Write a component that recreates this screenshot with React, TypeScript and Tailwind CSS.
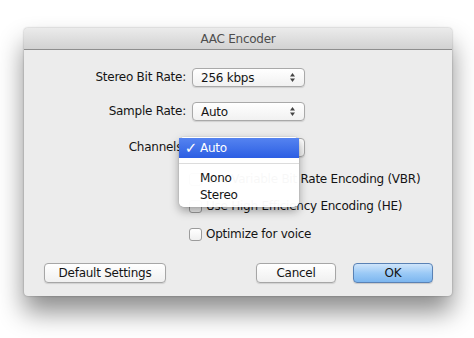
import React from 'react';

// Small up/down arrows shown at the right of a popup button
const Arrows: React.FC = () => (
  <svg width="7" height="11" viewBox="0 0 7 11" className="shrink-0">
    <path d="M3.5 1 L6 4.5 L1 4.5 Z" fill="#444" />
    <path d="M3.5 10 L6 6.5 L1 6.5 Z" fill="#444" />
  </svg>
);

const Popup: React.FC<{ value: string }> = ({ value }) => (
  <div className="w-[113px] h-[19px] flex items-center justify-between pl-[8px] pr-[8px] rounded-[4px] border border-[#a9a9a9] bg-gradient-to-b from-white to-[#f1f1f1] shadow-[0_1px_1px_rgba(0,0,0,0.12)]">
    <span>{value}</span>
    <Arrows />
  </div>
);

const Checkbox: React.FC<{ label: string }> = ({ label }) => (
  <div className="flex items-center gap-[4px] h-[18px]">
    <div className="w-[13px] h-[13px] rounded-[3px] border border-[#9b9b9b] bg-gradient-to-b from-white to-[#f0f0f0]" />
    <span>{label}</span>
  </div>
);

const Button: React.FC<{ label: string; primary?: boolean; width: string }> = ({ label, primary, width }) => (
  <div
    className={
      primary
        ? `${width} h-[20px] flex items-center justify-center rounded-[4px] border border-[#5a82b5] bg-gradient-to-b from-[#cfe5fb] via-[#9ccaf6] to-[#7cb6ef] shadow-[0_1px_1px_rgba(0,0,0,0.15)]`
        : `${width} h-[20px] flex items-center justify-center rounded-[4px] border border-[#a6a6a6] bg-gradient-to-b from-white to-[#f0f0f0] shadow-[0_1px_1px_rgba(0,0,0,0.12)]`
    }
  >
    {label}
  </div>
);

const App: React.FC = () => {
  return (
    <div
      className="w-[474px] h-[338px] bg-white pt-[28px] pl-[24px] text-[12px] tracking-[-0.25px] text-[#141414]"
      style={{ fontFamily: '"DejaVu Sans", sans-serif' }}
    >
      <div className="relative w-[428px] h-[268px] rounded-[4px] bg-[#ececec] shadow-[0_16px_26px_rgba(0,0,0,0.45),0_0_2px_rgba(0,0,0,0.35)] flex flex-col">
        {/* Title bar */}
        <div className="h-[22px] rounded-t-[4px] bg-gradient-to-b from-[#ebebeb] to-[#d2d2d2] border-b border-[#8e8e8e] flex items-center justify-center text-[#4d4d4d]">
          AAC Encoder
        </div>

        {/* Form */}
        <div className="grid grid-cols-[162px_1fr] gap-x-[6px] items-center pt-[18px]">
          <div className="text-right h-[19px] leading-[19px]">Stereo Bit Rate:</div>
          <Popup value="256 kbps" />
          <div className="h-[15px]" />
          <div className="h-[15px]" />
          <div className="text-right h-[19px] leading-[19px]">Sample Rate:</div>
          <Popup value="Auto" />
          <div className="h-[17px]" />
          <div className="h-[17px]" />
          <div className="text-right h-[19px] leading-[19px]">Channels:</div>
          <Popup value="Auto" />
        </div>

        <div className="flex flex-col gap-[9px] pl-[165px] pt-[13px]">
          <Checkbox label="Use Variable Bit Rate Encoding (VBR)" />
          <Checkbox label="Use High Efficiency Encoding (HE)" />
          <div className="pt-[1px]">
            <Checkbox label="Optimize for voice" />
          </div>
        </div>

        {/* Buttons */}
        <div className="flex items-center pl-[20px] pr-[19px] pt-[20px]">
          <Button label="Default Settings" width="w-[122px]" />
          <div className="flex-1" />
          <Button label="Cancel" width="w-[80px]" />
          <div className="w-[17px]" />
          <Button label="OK" primary width="w-[80px]" />
        </div>

        {/* Open channels menu */}
        <div className="absolute left-[155px] top-[109px] w-[120px] h-[70px] rounded-[5px] bg-white/[0.97] shadow-[0_4px_10px_rgba(0,0,0,0.35),0_0_1px_rgba(0,0,0,0.4)] pt-[1px]">
          <div className="h-[20px] flex items-center bg-gradient-to-b from-[#5583f0] to-[#2c5ee3] text-white">
            <span className="w-[21px] pl-[3px] text-center text-[15px] font-bold leading-none">✓</span>
            <span>Auto</span>
          </div>
          <div className="h-px bg-[#dcdcdc] mt-[5px] mb-[6px]" />
          <div className="pl-[21px] h-[17px] leading-[17px]">Mono</div>
          <div className="pl-[21px] h-[17px] leading-[17px]">Stereo</div>
        </div>
      </div>
    </div>
  );
};

export default App;
